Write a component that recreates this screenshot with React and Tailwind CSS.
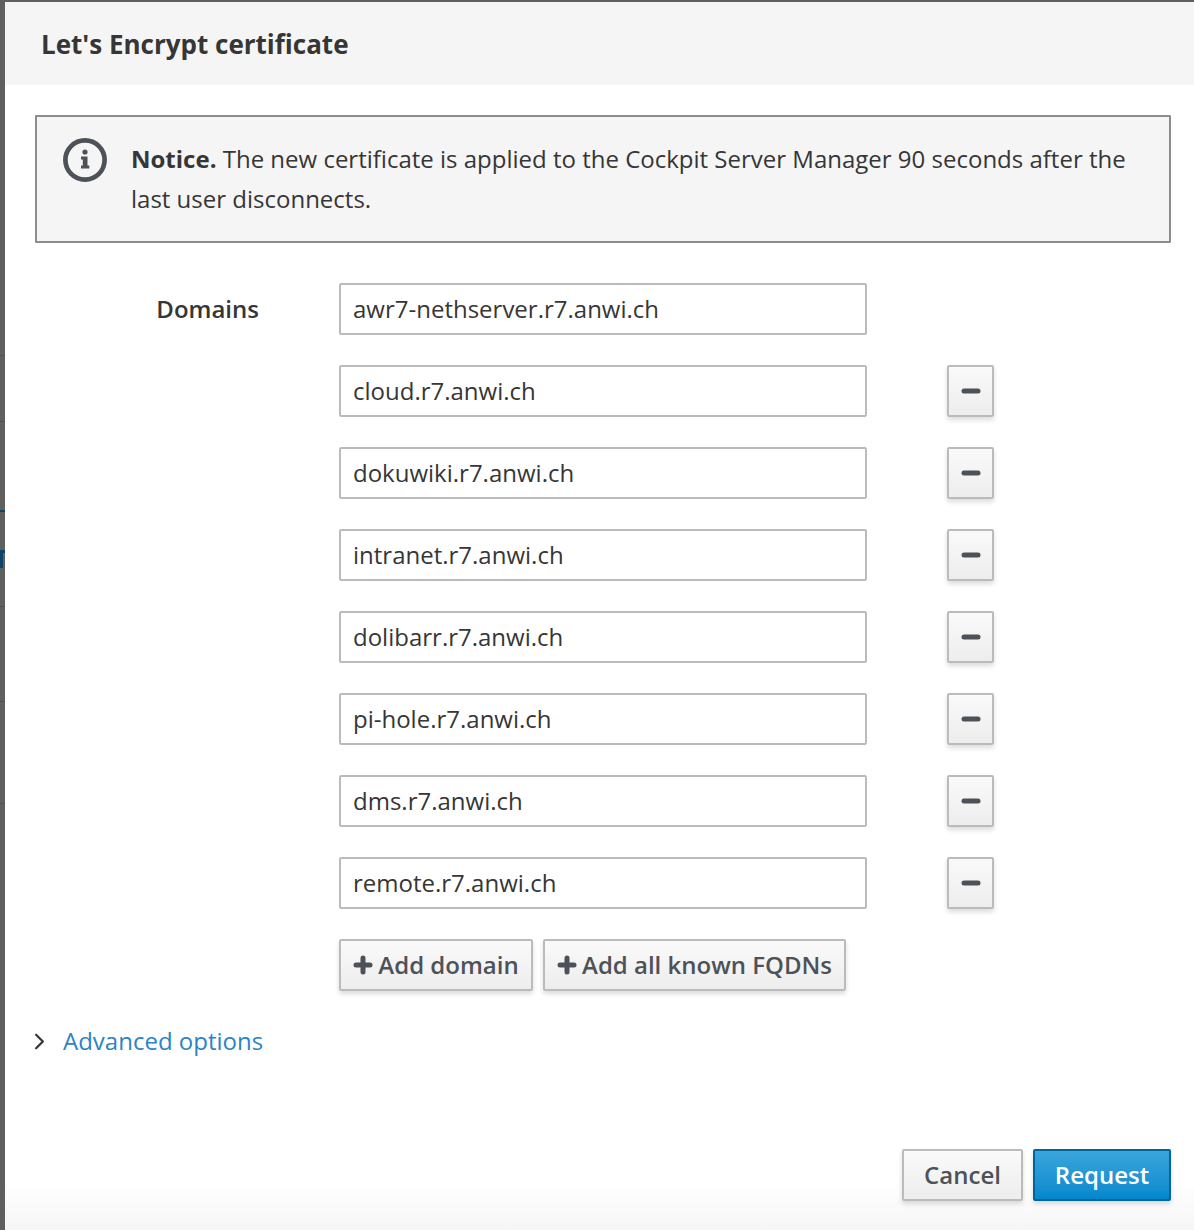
import { ChevronRight, Plus, Minus } from 'lucide-react';

const DOMAINS = [
  'cloud.r7.anwi.ch',
  'dokuwiki.r7.anwi.ch',
  'intranet.r7.anwi.ch',
  'dolibarr.r7.anwi.ch',
  'pi-hole.r7.anwi.ch',
  'dms.r7.anwi.ch',
  'remote.r7.anwi.ch',
];

const btn = 'h-[52px] border-2 border-[#bbbbbb] rounded-[2px] bg-gradient-to-b from-[#fafafa] to-[#ededed] shadow-[0_3px_5px_rgba(0,0,0,0.14)] flex items-center justify-center font-semibold text-[#4d5258]';

function DomainInput({ value }) {
  return (
    <div className="w-[528px] h-[52px] border-2 border-[#bbbbbb] rounded-[2px] px-[12px] flex items-center text-[24px] text-[#363636] shrink-0">
      {value}
    </div>
  );
}

export default function App() {
  return (
    <div className="relative w-[1194px] h-[1230px] bg-[#5f5f5f] pl-[5px] pt-[2px] overflow-hidden font-['Open_Sans',sans-serif] text-[#363636]">
      {/* page behind the dimmed backdrop, only a sliver shows */}
      <div className="absolute left-0 top-[355px] w-[5px] h-[1px] bg-[#505050]" />
      <div className="absolute left-0 top-[421px] w-[5px] h-[1px] bg-[#505050]" />
      <div className="absolute left-0 top-[510px] w-[5px] h-[2px] bg-[#0e4468]" />
      <div className="absolute left-0 top-[550px] w-[5px] h-[3px] bg-[#0e4468]" />
      <div className="absolute left-0 top-[553px] w-[3px] h-[15px] bg-[#0e4468]" />
      <div className="absolute left-0 top-[606px] w-[5px] h-[1px] bg-[#505050]" />
      <div className="absolute left-0 top-[701px] w-[5px] h-[1px] bg-[#505050]" />
      <div className="absolute left-0 top-[803px] w-[5px] h-[1px] bg-[#505050]" />

      <div className="h-[1228px] bg-gradient-to-b from-white from-[96%] to-[#f6f6f6] flex flex-col">
        {/* Header */}
        <div className="h-[83px] bg-[#f5f5f5] pl-[36px] flex items-center">
          <h2 className="text-[26px] font-bold leading-none">Let's Encrypt certificate</h2>
        </div>

        <div className="pl-[30px] pr-[23px] pt-[30px] flex-1 flex flex-col">
          {/* Notice */}
          <div className="h-[128px] border-2 border-[#8b8d8f] rounded-[1px] bg-[#f5f5f5] flex pl-[26px] pt-[21px]">
            <svg viewBox="0 0 44 44" width="44" height="44" className="shrink-0 text-[#4d5258]" fill="currentColor">
              <circle cx="22" cy="22" r="19.6" fill="none" stroke="currentColor" strokeWidth="4.7" />
              <circle cx="22" cy="14" r="2.6" />
              <path d="M18 18.5h6.5v9h1.8v3h-8.3v-3h1.8v-6h-1.8z" />
            </svg>
            <p className="ml-[24px] mt-[1px] text-[24px] leading-[40px] w-[1010px]">
              <strong className="font-bold">Notice.</strong> The new certificate is applied to the Cockpit Server Manager 90 seconds after the last user disconnects.
            </p>
          </div>

          {/* Domains */}
          <div className="mt-[40px] flex">
            <div className="w-[304px] text-right pr-[80px] text-[24px] font-semibold leading-[52px]">Domains</div>
            <div className="flex flex-col gap-[30px]">
              <DomainInput value="awr7-nethserver.r7.anwi.ch" />
              {DOMAINS.map((d) => (
                <div key={d} className="flex gap-[80px]">
                  <DomainInput value={d} />
                  <button className={`${btn} w-[47px]`}>
                    <Minus size={24} strokeWidth={5} color="#4d5258" />
                  </button>
                </div>
              ))}
              <div className="flex gap-[10px]">
                <button className={`${btn} w-[194px] text-[24px] gap-[3px] pr-[2px]`}>
                  <Plus size={24} strokeWidth={5} color="#4d5258" />
                  Add domain
                </button>
                <button className={`${btn} w-[303px] text-[24px] gap-[3px] pr-[2px]`}>
                  <Plus size={24} strokeWidth={5} color="#4d5258" />
                  Add all known FQDNs
                </button>
              </div>
            </div>
          </div>

          {/* Advanced */}
          <div className="mt-[30px] flex items-center h-[40px]">
            <ChevronRight size={27} strokeWidth={2} color="#363636" className="ml-[-9px]" />
            <a className="ml-[10px] text-[24px] text-[#2b84c4]">Advanced options</a>
          </div>

          {/* Footer */}
          <div className="mt-[88px] flex justify-end gap-[10px]">
            <button className={`${btn} w-[121px] text-[24px]`}>Cancel</button>
            <button className="w-[138px] h-[52px] border-2 border-[#00659c] rounded-[2px] bg-gradient-to-b from-[#39a5dc] to-[#0088ce] shadow-[0_3px_5px_rgba(0,0,0,0.14)] text-white text-[24px] font-semibold">
              Request
            </button>
          </div>
        </div>
      </div>
    </div>
  );
}
